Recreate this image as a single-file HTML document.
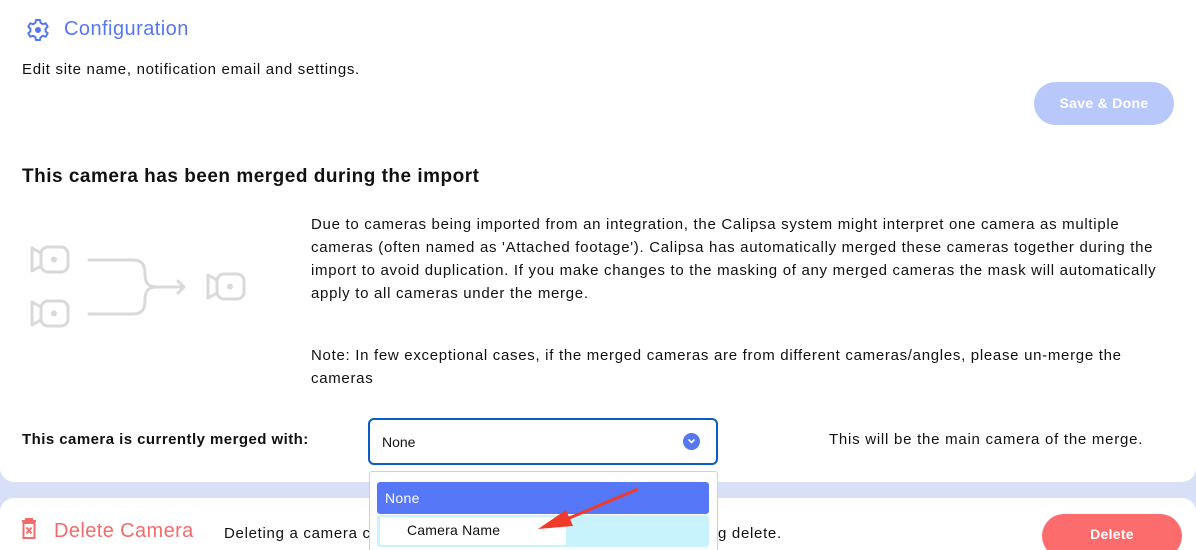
<!DOCTYPE html>
<html><head><meta charset="utf-8"><style>
*{margin:0;padding:0;box-sizing:border-box}
html,body{width:1196px;height:550px;overflow:hidden}
body{background:#d8e0f8;font-family:"Liberation Sans",sans-serif;color:#111;position:relative;letter-spacing:0.7px}
.card1{position:absolute;left:0;top:0;width:1196px;height:482px;background:#fff;border-radius:0 0 14px 14px}
.card2{position:absolute;left:0;top:498px;width:1196px;height:52px;background:#fff;border-radius:14px 14px 0 0}
.a{position:absolute;white-space:nowrap}
</style></head><body>
<div class="card1"></div>
<div class="card2"></div>
<svg class="a" style="left:26px;top:18px" width="24" height="24" viewBox="0 0 24 24" fill="none" stroke="#5577f0" stroke-width="2"><path d="M10 2h4l.6 2.8 2.4 1.4 2.7-.9 2 3.4-2.1 1.9v2.8l2.1 1.9-2 3.4-2.7-.9-2.4 1.4L14 22h-4l-.6-2.8-2.4-1.4-2.7.9-2-3.4 2.1-1.9v-2.8L2.3 8.7l2-3.4 2.7.9 2.4-1.4z" stroke-linejoin="round"/><circle cx="12" cy="12" r="2" fill="#5577f0"/></svg>
<div class="a" style="left:64px;top:18px;font-size:20px;color:#5577f0;letter-spacing:0.45px">Configuration</div>
<div class="a" style="left:22px;top:61px;font-size:15px">Edit site name, notification email and settings.</div>
<div class="a" style="left:1034px;top:82px;width:140px;height:43px;border-radius:22px;background:#b9c8fb;color:#fff;font-size:14px;font-weight:bold;text-align:center;line-height:43px;letter-spacing:0.3px">Save &amp; Done</div>
<div class="a" style="left:22px;top:166px;font-size:19px;font-weight:bold;letter-spacing:0.5px">This camera has been merged during the import</div>
<svg class="a" style="left:0;top:230px" width="260" height="110" viewBox="0 0 260 110" fill="none" stroke="#d9d9d9" stroke-width="3" stroke-linecap="round" stroke-linejoin="round">
<g id="c"><rect x="41" y="17" width="27" height="25" rx="7"/><path d="M41 23l-9-5v23l9-5"/><circle cx="54" cy="29.5" r="3" fill="#d9d9d9" stroke="none"/></g>
<use href="#c" y="54"/><use href="#c" x="176" y="27"/>
<path d="M89 30h44c10 0 12 6 12 14c0 10 4 13 12 13h26M89 84h44c10 0 12-6 12-14c0-10 4-13 12-13"/><path d="M178 51l6 6-6 6"/>
</svg>
<div class="a" style="left:311px;top:213px;font-size:15px;line-height:23px;white-space:normal;width:870px">Due to cameras being imported from an integration, the Calipsa system might interpret one camera as multiple cameras (often named as 'Attached footage'). Calipsa has automatically merged these cameras together during the import to avoid duplication. If you make changes to the masking of any merged cameras the mask will automatically apply to all cameras under the merge.</div>
<div class="a" style="left:311px;top:344px;font-size:15px;line-height:23px;white-space:normal;width:850px">Note: In few exceptional cases, if the merged cameras are from different cameras/angles, please un-merge the cameras</div>
<div class="a" style="left:22px;top:431px;font-size:15px;font-weight:bold;letter-spacing:0.45px">This camera is currently merged with:</div>
<div class="a" style="left:368px;top:418px;width:350px;height:47px;border:2px solid #0a5cc8;border-radius:6px"></div>
<div class="a" style="left:382px;top:434px;font-size:14px;letter-spacing:0">None</div>
<div class="a" style="left:683px;top:433px;width:17px;height:17px;border-radius:50%;background:#5577f0"></div>
<svg class="a" style="left:687px;top:438px" width="9" height="7"><path d="M1.5 1.5l3 3 3-3" stroke="#fff" stroke-width="1.6" fill="none"/></svg>
<div class="a" style="left:829px;top:431px;font-size:15px;letter-spacing:0.75px">This will be the main camera of the merge.</div>
<div class="a" style="left:21px;top:518px;width:16px;height:22px"><svg width="16" height="22" viewBox="0 0 16 22" fill="none" stroke="#f26b6b" stroke-width="2"><path d="M1 3h14M5 3V1h6v2"/><rect x="2.5" y="5" width="11" height="15"/><path d="M5.5 9.5l5 6M10.5 9.5l-5 6"/></svg></div>
<div class="a" style="left:54px;top:520px;font-size:20px;color:#f26b6b;letter-spacing:0.4px">Delete Camera</div>
<div class="a" style="left:224px;top:525px;font-size:15px">Deleting a camera c</div>
<div class="a" style="left:718px;top:525px;font-size:15px">g delete.</div>
<div class="a" style="left:1042px;top:514px;width:140px;height:44px;border-radius:22px;background:#fd6c6c;color:#fff;font-size:14px;font-weight:bold;text-align:center;line-height:40px;letter-spacing:0.3px">Delete</div>
<div class="a" style="left:369px;top:471px;width:349px;height:90px;background:#fff;border:1px solid #d0d0d0;border-radius:3px"></div>
<div class="a" style="left:377px;top:482px;width:332px;height:32px;background:#5577f8;border-radius:3px;color:#fff;font-size:14px;padding:8px 0 0 8px;letter-spacing:0.3px">None</div>
<div class="a" style="left:377px;top:515px;width:332px;height:32px;background:#c8f2fc;border-radius:3px"></div>
<div class="a" style="left:380px;top:517px;width:186px;height:28px;background:#fff"></div>
<div class="a" style="left:407px;top:522px;font-size:14px;letter-spacing:0.2px">Camera Name</div>
<svg class="a" style="left:530px;top:484px" width="115" height="50"><path d="M108 5L30 38" stroke="#f03a2a" stroke-width="3"/><path d="M8 45L36 26 43 42z" fill="#f03a2a"/></svg>
</body></html>
